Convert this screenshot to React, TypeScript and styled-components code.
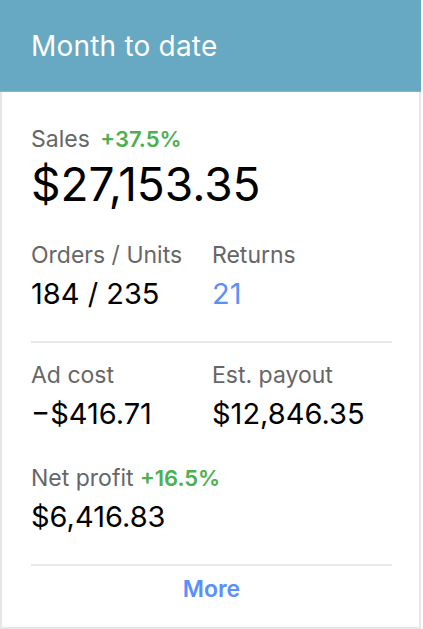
import styled, { createGlobalStyle } from 'styled-components'

const GlobalStyle = createGlobalStyle`
  html, body {
    margin: 0;
    padding: 0;
    background: #ffffff;
    font-family: Inter, 'Noto Sans', sans-serif;
  }
`

type Metric = {
  label: string
  value: string
  tone?: 'link'
}

const topMetrics: Metric[] = [
  { label: 'Orders / Units', value: '184 / 235' },
  { label: 'Returns', value: '21', tone: 'link' }
]

const costMetrics: Metric[] = [
  { label: 'Ad cost', value: '\u2212$416.71' },
  { label: 'Est. payout', value: '$12,846.35' }
]

const App = () => {
  return (
    <>
      <GlobalStyle />
      <Card>
        <Header>Month to date</Header>
        <Body>
          <Section>
            <Label>
              Sales <Change $gap={4}>+37.5%</Change>
            </Label>
            <BigValue>$27,153.35</BigValue>
          </Section>

          <Grid $gap={30}>
            {topMetrics.map((m) => (
              <Section key={m.label}>
                <Label>{m.label}</Label>
                <Value $tone={m.tone}>{m.value}</Value>
              </Section>
            ))}
          </Grid>

          <Divider />

          <Grid $gap={17}>
            {costMetrics.map((m) => (
              <Section key={m.label}>
                <Label>{m.label}</Label>
                <Value>{m.value}</Value>
              </Section>
            ))}
          </Grid>

          <Section $spaced>
            <Label>
              Net profit <Change $gap={0}>+16.5%</Change>
            </Label>
            <Value>$6,416.83</Value>
          </Section>

          <Divider />

          <MoreLink href="#">More</MoreLink>
        </Body>
      </Card>
    </>
  )
}

export default App

const Card = styled.div({
  width: 421,
  height: 629,
  boxSizing: 'border-box',
  border: '2px solid #e6e6e6',
  borderTop: 'none',
  background: '#fff',
  display: 'flex',
  flexDirection: 'column'
})
const Header = styled.div({
  height: 92,
  margin: '0 -2px',
  padding: '0 31px',
  boxSizing: 'border-box',
  display: 'flex',
  alignItems: 'center',
  background: '#67a8c2',
  color: '#fff',
  fontSize: 28,
  fontWeight: 400,
  letterSpacing: 0.2,
  borderBottom: '1px solid #80b7cc'
})
const Body = styled.div({
  padding: '32px 27px 0 29px',
  display: 'flex',
  flexDirection: 'column'
})
const Section = styled.div<{ $spaced?: boolean }>(({ $spaced }) => ({
  display: 'flex',
  flexDirection: 'column',
  marginTop: $spaced ? 25 : 0
}))
const Grid = styled.div<{ $gap: number }>(({ $gap }) => ({
  display: 'grid',
  gridTemplateColumns: '181px 1fr',
  marginTop: $gap
}))
const Label = styled.div({
  fontSize: 23,
  color: '#666',
  lineHeight: '30px',
  whiteSpace: 'nowrap'
})
const Change = styled.span<{ $gap: number }>(({ $gap }) => ({
  color: '#4caf50',
  fontWeight: 600,
  fontSize: 22,
  marginLeft: $gap
}))
const BigValue = styled.div({
  fontSize: 46,
  color: '#000',
  lineHeight: '52px',
  marginTop: 4
})
const Value = styled.div<{ $tone?: 'link' }>(({ $tone }) => ({
  fontSize: 29,
  color: $tone === 'link' ? '#5b8ff9' : '#000',
  lineHeight: '48px'
}))
const Divider = styled.hr({
  width: '100%',
  height: 2,
  border: 'none',
  background: '#e8e8e8',
  margin: '23px 0 0'
})
const MoreLink = styled.a({
  alignSelf: 'center',
  marginTop: 8,
  fontSize: 23,
  lineHeight: '30px',
  fontWeight: 600,
  color: '#5b8ff9',
  textDecoration: 'none'
})
